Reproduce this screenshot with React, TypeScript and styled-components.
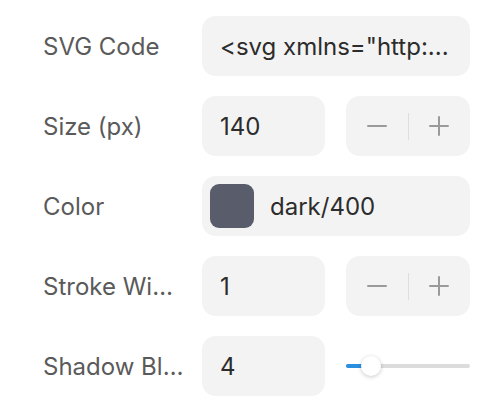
import React from "react";
import styled, { createGlobalStyle } from "styled-components";

const GlobalStyle = createGlobalStyle`
    body {
        margin: 0;
        background: #ffffff;
        font-family: Inter, "Noto Sans", sans-serif;
    }
`;

const Panel = styled.div`
    display: grid;
    grid-template-columns: 142px 1fr;
    column-gap: 17px;
    row-gap: 20px;
    padding: 16px 22px 0 43px;
    width: 492px;
    box-sizing: border-box;
`;

const Label = styled.div`
    height: 60px;
    display: flex;
    align-items: center;
    font-size: 24px;
    color: #5a5a5a;
    white-space: nowrap;
    overflow: hidden;

    span {
        overflow: hidden;
        text-overflow: ellipsis;
    }
`;

const Split = styled.div`
    display: grid;
    grid-template-columns: 123px 124px;
    column-gap: 21px;
`;

const Field = styled.div<{ $pad?: number }>`
    height: 60px;
    box-sizing: border-box;
    background: #f3f3f3;
    border-radius: 14px;
    display: flex;
    align-items: center;
    gap: 16px;
    padding-left: ${(p) => p.$pad ?? 18}px;
    font-size: 24px;
    color: #2c2c2c;
    white-space: nowrap;
    overflow: hidden;
`;

const Swatch = styled.div<{ $color: string }>`
    width: 44px;
    height: 44px;
    border-radius: 9px;
    background: ${(p) => p.$color};
    flex-shrink: 0;
`;

const Stepper = styled.div`
    height: 60px;
    background: #f3f3f3;
    border-radius: 14px;
    display: grid;
    grid-template-columns: 1fr 1px 1fr;
    align-items: center;
`;

const StepButton = styled.button`
    border: none;
    background: none;
    padding: 0;
    height: 60px;
    display: flex;
    align-items: center;
    justify-content: center;
    color: #9a9a9a;
`;

const Divider = styled.div`
    width: 1px;
    height: 27px;
    background: #dedede;
`;

const SliderWrap = styled.div`
    height: 60px;
    display: flex;
    align-items: center;
`;

const Track = styled.div`
    position: relative;
    width: 100%;
    height: 4px;
    border-radius: 2px;
    background: #dcdcdc;
`;

const Fill = styled.div`
    position: absolute;
    left: 0;
    top: 0;
    height: 4px;
    border-radius: 2px;
    background: #2b8fe0;
`;

const Thumb = styled.div`
    position: absolute;
    top: 50%;
    width: 20px;
    height: 20px;
    margin-left: -10px;
    margin-top: -10px;
    border-radius: 50%;
    background: #ffffff;
    box-shadow: 0 1px 4px rgba(0, 0, 0, 0.22);
`;

const Minus = () => (
    <svg width="20" height="20" viewBox="0 0 20 20">
        <path d="M1 10h18" stroke="currentColor" strokeWidth="2" strokeLinecap="round" />
    </svg>
);

const Plus = () => (
    <svg width="20" height="20" viewBox="0 0 20 20">
        <path d="M1 10h18M10 1v18" stroke="currentColor" strokeWidth="2" strokeLinecap="round" />
    </svg>
);

const NumberStepper = () => (
    <Stepper>
        <StepButton>
            <Minus />
        </StepButton>
        <Divider />
        <StepButton>
            <Plus />
        </StepButton>
    </Stepper>
);

const Slider = ({ pct }: { pct: number }) => (
    <SliderWrap>
        <Track>
            <Fill style={{ width: `${pct}%` }} />
            <Thumb style={{ left: `${pct}%` }} />
        </Track>
    </SliderWrap>
);

const App = () => (
    <>
        <GlobalStyle />
        <Panel>
            <Label>
                <span>SVG Code</span>
            </Label>
            <Field>{'<svg xmlns="http:...'}</Field>

            <Label>
                <span>Size (px)</span>
            </Label>
            <Split>
                <Field>140</Field>
                <NumberStepper />
            </Split>

            <Label>
                <span>Color</span>
            </Label>
            <Field $pad={8}>
                <Swatch $color="#595d6b" />
                dark/400
            </Field>

            <Label>
                <span>Stroke Width</span>
            </Label>
            <Split>
                <Field>1</Field>
                <NumberStepper />
            </Split>

            <Label>
                <span>Shadow Blur</span>
            </Label>
            <Split>
                <Field>4</Field>
                <Slider pct={20} />
            </Split>
        </Panel>
    </>
);

export default App;
